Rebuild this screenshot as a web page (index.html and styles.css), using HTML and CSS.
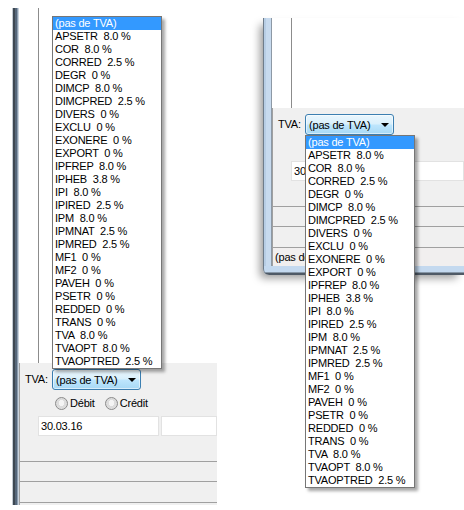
FILE: index.html
```html
<!DOCTYPE html>
<html lang="fr">
<head>
<meta charset="utf-8">
<title>TVA</title>
<link rel="stylesheet" href="styles.css">
</head>
<body>
<div class="desk">
  <section class="scene scene-left">
    <div class="win win-left">
      <div class="frame frame-left"></div>
      <div class="client">
        <div class="top-area"><div class="col-line"></div></div>
        <div class="panel">
          <div class="row-tva">
            <span class="lbl">TVA:</span>
            <div class="combo">
              <span class="combo-text">(pas de TVA)</span><span class="arrow"></span>
              <ul class="list list-up">
                <li class="sel">(pas de TVA)</li>
                <li>APSETR  8.0 %</li>
                <li>COR  8.0 %</li>
                <li>CORRED  2.5 %</li>
                <li>DEGR  0 %</li>
                <li>DIMCP  8.0 %</li>
                <li>DIMCPRED  2.5 %</li>
                <li>DIVERS  0 %</li>
                <li>EXCLU  0 %</li>
                <li>EXONERE  0 %</li>
                <li>EXPORT  0 %</li>
                <li>IPFREP  8.0 %</li>
                <li>IPHEB  3.8 %</li>
                <li>IPI  8.0 %</li>
                <li>IPIRED  2.5 %</li>
                <li>IPM  8.0 %</li>
                <li>IPMNAT  2.5 %</li>
                <li>IPMRED  2.5 %</li>
                <li>MF1  0 %</li>
                <li>MF2  0 %</li>
                <li>PAVEH  0 %</li>
                <li>PSETR  0 %</li>
                <li>REDDED  0 %</li>
                <li>TRANS  0 %</li>
                <li>TVA  8.0 %</li>
                <li>TVAOPT  8.0 %</li>
                <li>TVAOPTRED  2.5 %</li>
              </ul>
            </div>
          </div>
          <div class="row-radio">
            <span class="radio"></span><span class="rlbl">Débit</span>
            <span class="radio"></span><span class="rlbl">Crédit</span>
          </div>
          <div class="row-fields">
            <div class="field field-date">30.03.16</div>
            <div class="field field-rest"></div>
          </div>
          <div class="gl gl-a"></div>
          <div class="gl gl-b"></div>
          <div class="gl gl-end"></div>
        </div>
      </div>
    </div>
  </section>

  <section class="scene scene-right">
    <div class="win win-right">
      <div class="win-body">
        <div class="frame frame-right"></div>
        <div class="client">
          <div class="top-area top-short"><div class="col-line"></div></div>
          <div class="panel">
            <div class="row-tva">
              <span class="lbl">TVA:</span>
              <div class="combo">
                <span class="combo-text">(pas de TVA)</span><span class="arrow"></span>
                <ul class="list list-down">
                  <li class="sel">(pas de TVA)</li>
                  <li>APSETR  8.0 %</li>
                  <li>COR  8.0 %</li>
                  <li>CORRED  2.5 %</li>
                  <li>DEGR  0 %</li>
                  <li>DIMCP  8.0 %</li>
                  <li>DIMCPRED  2.5 %</li>
                  <li>DIVERS  0 %</li>
                  <li>EXCLU  0 %</li>
                  <li>EXONERE  0 %</li>
                  <li>EXPORT  0 %</li>
                  <li>IPFREP  8.0 %</li>
                  <li>IPHEB  3.8 %</li>
                  <li>IPI  8.0 %</li>
                  <li>IPIRED  2.5 %</li>
                  <li>IPM  8.0 %</li>
                  <li>IPMNAT  2.5 %</li>
                  <li>IPMRED  2.5 %</li>
                  <li>MF1  0 %</li>
                  <li>MF2  0 %</li>
                  <li>PAVEH  0 %</li>
                  <li>PSETR  0 %</li>
                  <li>REDDED  0 %</li>
                  <li>TRANS  0 %</li>
                  <li>TVA  8.0 %</li>
                  <li>TVAOPT  8.0 %</li>
                  <li>TVAOPTRED  2.5 %</li>
                </ul>
              </div>
            </div>
            <div class="row-radio">
              <span class="radio"></span><span class="rlbl">Débit</span>
              <span class="radio"></span><span class="rlbl">Crédit</span>
            </div>
            <div class="row-fields">
              <div class="field field-date">30.03.16</div>
              <div class="field field-rest"></div>
            </div>
            <div class="gl gl-a"></div>
            <div class="gl gl-b"></div>
          </div>
          <div class="status">(pas de TVA)</div>
        </div>
      </div>
      <div class="frame-bottom"></div>
    </div>
  </section>
</div>
</body>
</html>
```

FILE: styles.css
```css
* { box-sizing: border-box; }

html, body {
  margin: 0;
  padding: 0;
  background: #ffffff;
}

body {
  width: 464px;
  height: 510px;
  overflow: hidden;
  font-family: "Liberation Sans", Arial, sans-serif;
  font-size: 11px;
  letter-spacing: -0.2px;
  color: #000;
}

.desk {
  display: flex;
  width: 464px;
  height: 510px;
}

.scene { height: 510px; }

.scene-left {
  width: 232px;
  padding: 8px 0 0 12px;
}

.scene-right {
  flex: 1;
  padding: 18px 0 0 31px;
}

/* ---------- windows ---------- */
.win-left {
  display: flex;
  width: 205px;
  height: 497px;
}

.frame-left {
  width: 7px;
  flex: none;
  background:
    linear-gradient(90deg, #c3cbd3 0 1px, #3e4852 1px 3px, #56677a 3px 5px, #8b9db0 5px 6px, #c9d2dc 6px 7px);
}

.win-right {
  width: 201px;
  display: flex;
  flex-direction: column;
  box-shadow: -5px 5px 8px -2px rgba(0, 0, 0, 0.4);
  border-bottom-left-radius: 6px;
}

.win-body {
  display: flex;
}

.frame-right {
  width: 9px;
  flex: none;
  background:
    linear-gradient(90deg, #6e7c8a 0 1px, #b7cde4 1px 3px, #c7daee 3px 8px, #8d99a5 8px 9px);
}

.frame-bottom {
  height: 9px;
  border-bottom-left-radius: 6px;
  background: linear-gradient(180deg, #c4d9ef 0 6px, #8797a7 6px 7px, #4f5a66 7px 9px);
  border-left: 1px solid #6e7c8a;
}

.client {
  flex: 1;
  display: flex;
  flex-direction: column;
  min-width: 0;
}

.top-area {
  height: 355px;
  background: #fff;
  padding-left: 19px;
}

.top-short { height: 90px; }

.col-line {
  height: 100%;
  border-left: 1px solid #8c8c8c;
}

/* ---------- panel ---------- */
.panel {
  flex: 1;
  display: flex;
  flex-direction: column;
  background: #f0f0f0;
  border-left: 1px solid #a0a0a0;
  padding-top: 6px;
}

.win-right .panel { flex: none; height: 139px; }

.row-tva {
  display: flex;
  align-items: center;
  height: 21px;
  padding-left: 5px;
}

.lbl {
  width: 27px;
  flex: none;
  line-height: 21px;
}

.combo {
  position: relative;
  width: 89px;
  height: 21px;
  display: flex;
  align-items: center;
  padding-left: 3px;
  border: 1px solid #3c7fb1;
  border-radius: 3px;
  background: linear-gradient(180deg, #eaf6fd 0%, #d9f0fc 48%, #bee6fd 52%, #a7d9f5 100%);
  box-shadow: inset 0 0 0 1px rgba(255, 255, 255, 0.55);
}

.combo-text {
  flex: 1;
  white-space: nowrap;
}

.arrow {
  width: 0;
  height: 0;
  margin-right: 4px;
  border-left: 4px solid transparent;
  border-right: 4px solid transparent;
  border-top: 4px solid #000;
}

/* ---------- dropdown list ---------- */
.list {
  position: absolute;
  left: -1px;
  width: 110px;
  margin: 0;
  padding: 0;
  list-style: none;
  background: #fff;
  border: 1px solid #767676;
  box-shadow: 3px 3px 3px rgba(0, 0, 0, 0.35);
  z-index: 10;
}

.list-up { bottom: calc(100% + 1px); }
.list-down { top: calc(100% + 1px); }

.list li {
  height: 13px;
  line-height: 13px;
  padding-left: 2px;
  white-space: pre;
}

.list li.sel {
  background: #3399ff;
  color: #fff;
}

/* ---------- radio ---------- */
.row-radio {
  display: flex;
  align-items: center;
  height: 14px;
  margin-top: 6px;
  padding-left: 35px;
}

.radio {
  width: 13px;
  height: 13px;
  flex: none;
  border-radius: 50%;
  border: 1px solid #8a8a8a;
  background: radial-gradient(circle at 50% 45%, #f4f4f4 0 35%, #dcdcdc 36% 60%, #eeeeee 100%);
  margin-right: 2px;
}

.rlbl { margin-right: 10px; }

/* ---------- fields ---------- */
.row-fields {
  display: flex;
  gap: 2px;
  height: 20px;
  margin-top: 6px;
  padding-left: 18px;
}

.field {
  height: 20px;
  background: #fff;
  border: 1px solid #e2e2e2;
  line-height: 18px;
  padding-left: 2px;
  overflow: hidden;
  white-space: nowrap;
}

.field-date { width: 121px; flex: none; }
.field-rest { flex: 1; }

/* ---------- grid lines ---------- */
.gl {
  border-top: 1px solid #a0a0a0;
  flex: none;
}

.gl-a { margin-top: 25px; height: 20px; }
.gl-b { height: 21px; }
.gl-end { flex: 1; }

/* ---------- status ---------- */
.status {
  height: 19px;
  background: #f1efef;
  border-top: 1px solid #a0a0a0;
  border-left: 1px solid #a0a0a0;
  padding-left: 2px;
  line-height: 18px;
  white-space: nowrap;
}
```
